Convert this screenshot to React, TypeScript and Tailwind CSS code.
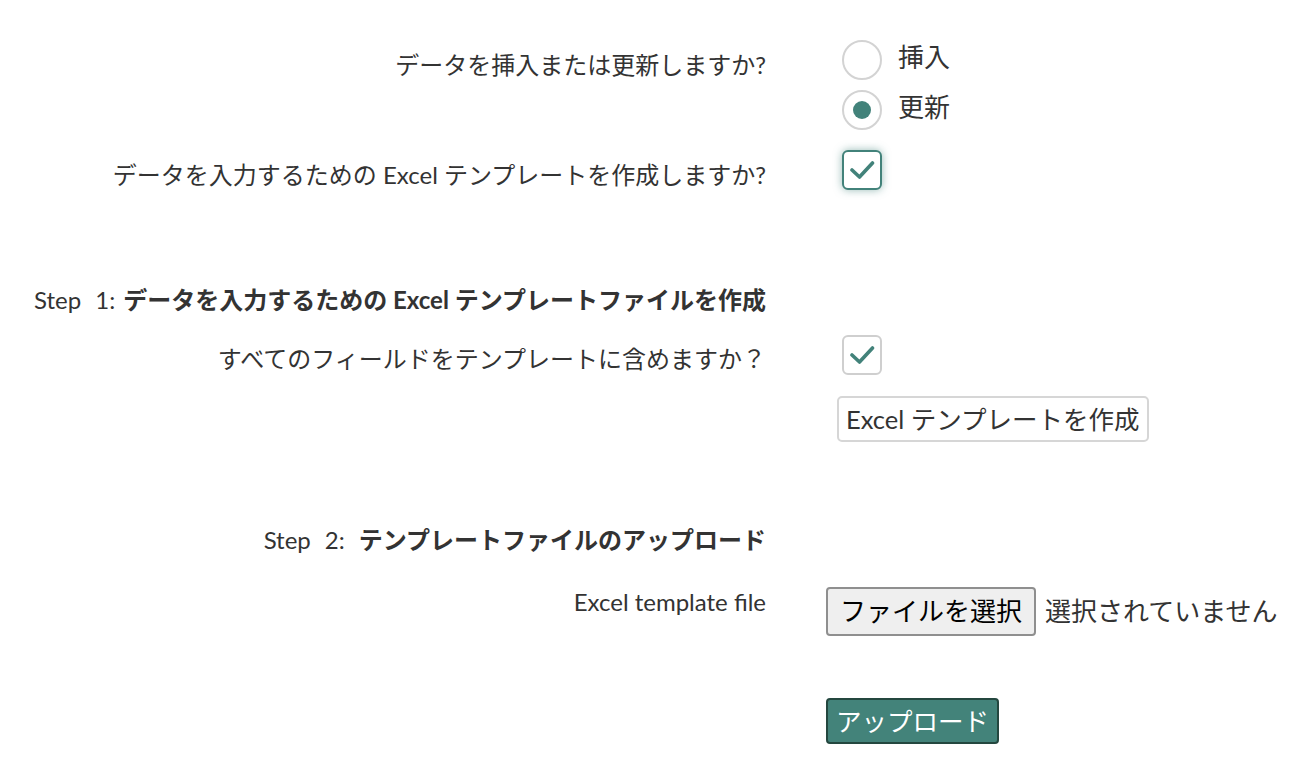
import React from 'react';

const font = { fontFamily: 'Lato, "Noto Sans CJK JP", sans-serif' };

function Check() {
  return (
    <svg width="26" height="20" viewBox="0 0 26 20" fill="none">
      <path d="M3 10 L10.5 17 L23.5 3" stroke="#42827a" strokeWidth="3.6" strokeLinecap="round" strokeLinejoin="round" />
    </svg>
  );
}

function Radio({ label, checked }: { label: string; checked?: boolean }) {
  return (
    <div className="flex items-center h-10 gap-4">
      <span className="w-10 h-10 rounded-full border-2 border-[#d3d3d3] bg-white flex items-center justify-center">
        {checked && <span className="w-[18px] h-[18px] rounded-full bg-[#42827a]" />}
      </span>
      <span className="text-[26px] text-[#333] pb-[6px]">{label}</span>
    </div>
  );
}

function Label({ children, className = '' }: { children: React.ReactNode; className?: string }) {
  return <div className={`w-[766px] shrink-0 text-right text-[24px] text-[#333] ${className}`}>{children}</div>;
}

export default function App() {
  return (
    <div className="min-h-[770px] bg-white pt-10" style={font}>
      {/* insert or update */}
      <div className="flex">
        <Label className="leading-[30px] pt-[10px]">データを挿入または更新しますか?</Label>
        <div className="ml-[76px] flex flex-col gap-[10px]">
          <Radio label="挿入" />
          <Radio label="更新" checked />
        </div>
      </div>

      {/* template option */}
      <div className="flex mt-5">
        <Label className="leading-[30px] pt-[10px]">データを入力するための Excel テンプレートを作成しますか?</Label>
        <div className="ml-[76px]">
          <span className="w-10 h-10 rounded-[6px] border-2 border-[#42827a] bg-white flex items-center justify-center shadow-[0_0_9px_rgba(66,130,122,0.55)]">
            <Check />
          </span>
        </div>
      </div>

      {/* step 1 */}
      <div className="flex mt-[90px]">
        <Label className="leading-10">
          Step<span className="ml-[14px]">1:</span>
          <span className="ml-[8px] font-bold">データを入力するための Excel テンプレートファイルを作成</span>
        </Label>
      </div>

      <div className="flex mt-[15px]">
        <Label className="leading-[32px] pt-2">すべてのフィールドをテンプレートに含めますか？</Label>
        <div className="ml-[76px]">
          <span className="w-10 h-10 rounded-[6px] border-2 border-[#cfcfcf] bg-white flex items-center justify-center">
            <Check />
          </span>
        </div>
      </div>

      <div className="flex mt-[21px]">
        <div className="w-[766px] shrink-0" />
        <button className="ml-[71px] h-[46px] px-[7px] rounded-[5px] border-2 border-[#d6d6d6] bg-white text-[25.5px] text-[#333]">
          Excel テンプレートを作成
        </button>
      </div>

      {/* step 2 */}
      <div className="flex mt-[78px]">
        <Label className="leading-10">
          Step<span className="ml-[14px]">2:</span>
          <span className="ml-[14px] font-bold">テンプレートファイルのアップロード</span>
        </Label>
      </div>

      <div className="flex mt-[27px]">
        <Label className="leading-[30px] text-[21px]">Excel template file</Label>
        <div className="ml-[60px] flex items-center">
          <button className="h-[49px] px-[12px] rounded-[4px] border-2 border-[#8f8f8f] bg-[#efefef] text-[26px] text-black">
            ファイルを選択
          </button>
          <span className="ml-[9px] text-[26px] text-[#333]">選択されていません</span>
        </div>
      </div>

      <div className="flex mt-[62px]">
        <div className="w-[766px] shrink-0" />
        <button className="ml-[60px] h-[46px] px-[8px] rounded-[4px] border-2 border-[#24473f] bg-[#43837a] text-[25.5px] text-white">
          アップロード
        </button>
      </div>
    </div>
  );
}
